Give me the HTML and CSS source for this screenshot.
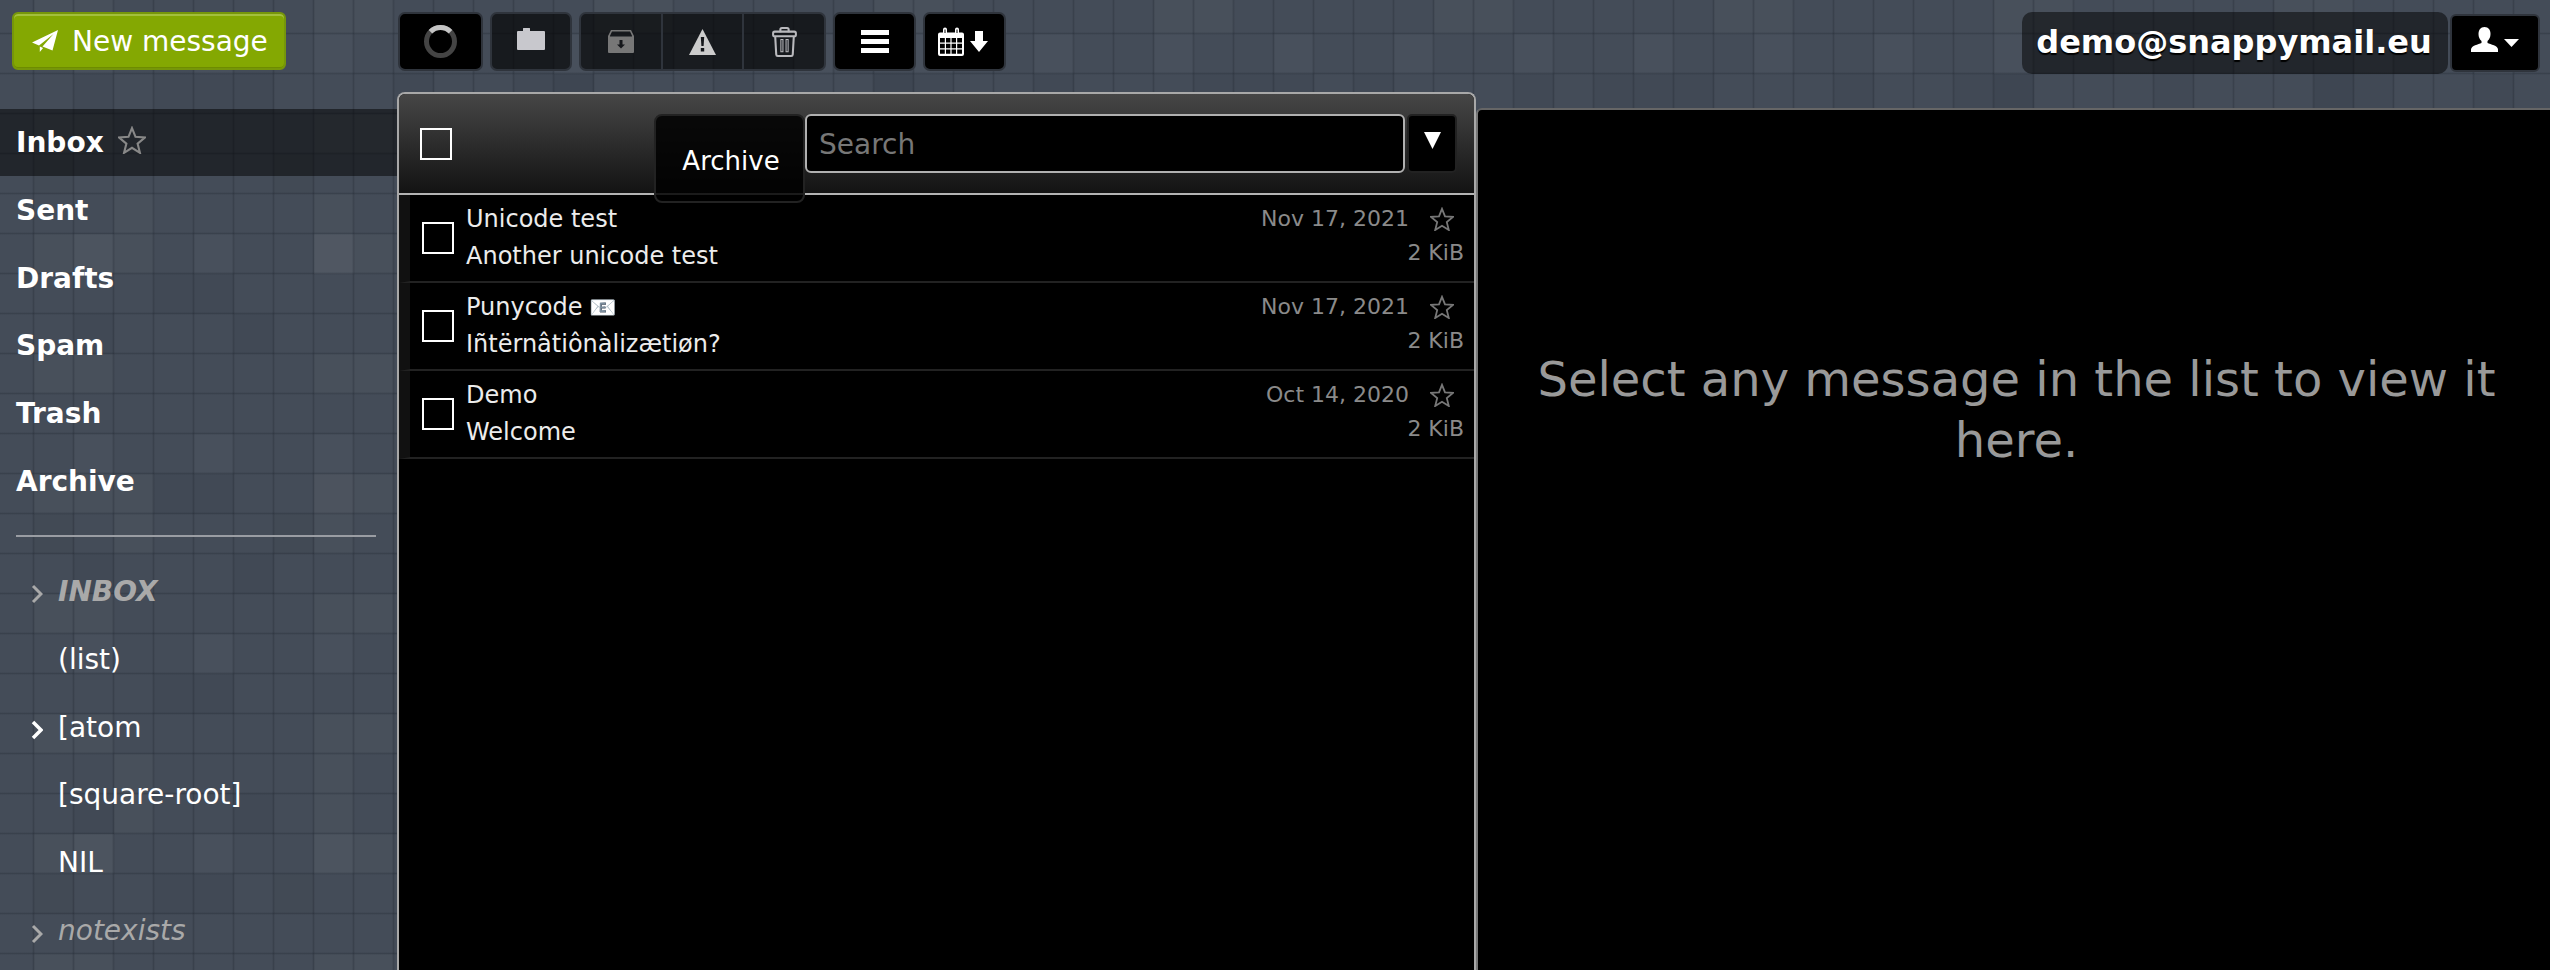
FILE: index.html
```html
<!DOCTYPE html>
<html lang="en">
<head>
<meta charset="utf-8">
<title>Inbox</title>
<link rel="stylesheet" href="styles.css">
</head>
<body>
<div class="app">
  <header class="top">
    <div class="top-left">
      <button class="new-msg">
        <svg class="ico-plane" viewBox="0 0 26 22"><path d="M26 0 0 12.500l7 3L21.500 4 10.500 16.500 20.500 20.500zM7.800 16.500V22l3.300-3.900z"/></svg>
        <span>New message</span>
      </button>
    </div>
    <div class="toolbar">
      <div class="btn on w85">
        <svg class="ico-spin" viewBox="0 0 33 33"><circle cx="16.500" cy="16.500" r="14" fill="none" stroke="#444" stroke-width="5"/><path d="M6.500 6.700a14 14 0 0 1 20 0" fill="none" stroke="#c4c4c4" stroke-width="5"/></svg>
      </div>
      <div class="btn off w82">
        <svg class="ico-folder" viewBox="0 0 28 22"><path d="M6 .5Q6 0 6.500 0h6q.5 0 .5.5V3h14q1 0 1 1v17q0 1-1 1H1q-1 0-1-1V4q0-1 1-1h5z"/></svg>
      </div>
      <div class="group">
        <div class="seg">
          <svg class="ico-archive" viewBox="0 0 26 23"><path d="M3 0h20l3 6v16q0 1-1 1H1q-1 0-1-1V6zM2 6.500h22v-.8L22 1.600H4L2 5.700z" fill-rule="evenodd"/><path d="M11.500 10h3v4.500h2.500L13 18.500 9 14.500h2.500z" fill="#15171b"/></svg>
        </div>
        <div class="seg">
          <svg class="ico-warn" viewBox="0 0 27 26"><path d="M13.500 0 27 26H0z"/><path d="M11.800 8h3.400l-.6 9h-2.200zM11.800 19h3.400v3.400h-3.400z" fill="#15171b"/></svg>
        </div>
        <div class="seg">
          <svg class="ico-trash" viewBox="0 0 24 29"><g fill="none" stroke="#b9b9bd" stroke-width="2"><path d="M8 5V2.500Q8 1 9.500 1h5Q16 1 16 2.500V5"/><rect x="1" y="4.500" width="22" height="4.500" rx="1.500"/><path d="M3 9l1 17.500Q4.100 28 5.500 28h13q1.400 0 1.500-1.500L21 9"/><path d="M8.500 12v12h2V12zM13.500 12v12h2V12z" stroke-width="1"/></g></svg>
        </div>
      </div>
      <div class="btn on w83">
        <svg class="ico-menu" viewBox="0 0 28 23"><path d="M0 0h28v5H0zM0 9h28v5H0zM0 18h28v5H0z"/></svg>
      </div>
      <div class="btn on w83 cal">
        <svg class="ico-cal" viewBox="0 0 26 29"><path d="M5 5.500V2.500Q5 .5 7 .5t2 2v3h8v-3q0-2 2-2t2 2v3h3q2 0 2 2V27q0 2-2 2H2q-2 0-2-2V7.500q0-2 2-2zM6.500 6V3q0-.8.5-.8t.5.8v3zM18.500 6V3q0-.8.5-.8t.5.8v3zM2 11v4.500h4.800V11zm6 0v4.500h4.400V11zm5.600 0v4.500h4.400V11zm5.600 0v4.500H24V11zM2 16.700v4.500h4.800v-4.500zm6 0v4.500h4.400v-4.500zm5.600 0v4.500h4.400v-4.500zm5.600 0v4.500H24v-4.500zM2 22.400v4.400h4.800v-4.400zm6 0v4.400h4.400v-4.400zm5.600 0v4.400h4.400v-4.400zm5.600 0v4.400H24v-4.400z" fill-rule="evenodd"/></svg>
        <svg class="ico-down" viewBox="0 0 18 21"><path d="M5 0h8v10h5l-9 11-9-11h5z"/></svg>
      </div>
    </div>
    <div class="account">
      <div class="email">demo@snappymail.eu</div>
      <div class="user-btn">
        <svg class="ico-user" viewBox="0 0 27 25"><path d="M13.500 0c4 0 6 3 6 7 0 3-1.200 5.500-3 7v2c3 1.500 10.500 2.500 10.500 6.500V25H0v-2.500C0 18.500 7.500 17.500 10.500 16v-2c-1.800-1.500-3-4-3-7 0-4 2-7 6-7z"/></svg>
        <svg class="ico-caret" viewBox="0 0 15 8"><path d="M0 0h15l-7.500 8z"/></svg>
      </div>
    </div>
  </header>

  <div class="content">
    <nav class="side">
      <div class="folder strong current">
        <span>Inbox</span>
        <svg class="star star-side" viewBox="0 0 24 24"><path d="M12 1.800l3 7.500 8 .6-6.200 5.200 2 7.900L12 18.700 5.200 23l2-7.900L1 9.900l8-.6z"/></svg>
      </div>
      <div class="folder strong">Sent</div>
      <div class="folder strong">Drafts</div>
      <div class="folder strong">Spam</div>
      <div class="folder strong">Trash</div>
      <div class="folder strong">Archive</div>
      <hr class="rule">
      <div class="folder sub muted bold-it"><svg class="chev" viewBox="0 0 12 20"><path d="M2 2l8 8-8 8"/></svg>INBOX</div>
      <div class="folder sub">(list)</div>
      <div class="folder sub"><svg class="chev chev-on" viewBox="0 0 12 20"><path d="M2 2l8 8-8 8"/></svg>[atom</div>
      <div class="folder sub">[square-root]</div>
      <div class="folder sub">NIL</div>
      <div class="folder sub muted ital"><svg class="chev" viewBox="0 0 12 20"><path d="M2 2l8 8-8 8"/></svg>notexists</div>
    </nav>

    <main class="panel">
      <div class="panel-head">
        <span class="check"></span>
        <div class="search">
          <div class="tooltip">Archive</div>
          <input class="search-input" type="text" placeholder="Search">
          <div class="search-drop"><svg class="ico-tri" viewBox="0 0 17 17"><path d="M0 0h17l-8.500 17z"/></svg></div>
        </div>
      </div>
      <div class="list">
        <article class="row">
          <span class="check"></span>
          <div class="row-main">
            <div class="line">Unicode test</div>
            <div class="line">Another unicode test</div>
          </div>
          <div class="row-meta">
            <div class="meta-line"><span>Nov 17, 2021</span><svg class="star star-row" viewBox="0 0 24 24"><path d="M12 1.800l3 7.500 8 .6-6.200 5.200 2 7.900L12 18.700 5.200 23l2-7.900L1 9.900l8-.6z"/></svg></div>
            <div class="meta-line">2 KiB</div>
          </div>
        </article>
        <article class="row">
          <span class="check"></span>
          <div class="row-main">
            <div class="line">Punycode <span class="emoji">📧</span></div>
            <div class="line">Iñtërnâtiônàlizætiøn?</div>
          </div>
          <div class="row-meta">
            <div class="meta-line"><span>Nov 17, 2021</span><svg class="star star-row" viewBox="0 0 24 24"><path d="M12 1.800l3 7.500 8 .6-6.200 5.200 2 7.900L12 18.700 5.200 23l2-7.900L1 9.900l8-.6z"/></svg></div>
            <div class="meta-line">2 KiB</div>
          </div>
        </article>
        <article class="row">
          <span class="check"></span>
          <div class="row-main">
            <div class="line">Demo</div>
            <div class="line">Welcome</div>
          </div>
          <div class="row-meta">
            <div class="meta-line"><span>Oct 14, 2020</span><svg class="star star-row" viewBox="0 0 24 24"><path d="M12 1.800l3 7.500 8 .6-6.200 5.200 2 7.900L12 18.700 5.200 23l2-7.900L1 9.900l8-.6z"/></svg></div>
            <div class="meta-line">2 KiB</div>
          </div>
        </article>
      </div>
    </main>

    <section class="preview">
      <p class="empty">Select any message in the list to view it here.</p>
    </section>
  </div>
</div>
</body>
</html>
```

FILE: styles.css
```css
* { box-sizing: border-box; }
html, body { margin: 0; height: 100%; }
body {
  overflow: hidden;
  font-family: "DejaVu Sans", sans-serif;
  color: #fff;
  background-color: #444c58;
  background-image:
    linear-gradient(90deg, transparent 0, rgba(30,36,46,.28) 1.5px, transparent 3px),
    linear-gradient(transparent 0, rgba(30,36,46,.28) 1.5px, transparent 3px),
    conic-gradient(at 40px 40px, transparent 75%, rgba(255,255,255,.025) 0),
    conic-gradient(at 80px 40px, transparent 75%, rgba(255,255,255,.02) 0),
    conic-gradient(at 40px 80px, transparent 75%, rgba(255,255,255,.02) 0),
    conic-gradient(at 40px 40px, transparent 75%, rgba(0,0,0,.04) 0),
    conic-gradient(at 80px 40px, transparent 75%, rgba(0,0,0,.04) 0),
    conic-gradient(at 40px 40px, transparent 75%, rgba(0,0,0,.03) 0);
  background-size:
    40px 40px,
    40px 40px,
    120px 200px,
    280px 120px,
    200px 280px,
    160px 240px,
    360px 200px,
    240px 360px;
  background-position:
    32px 0,
    0 32px,
    194px 34px,
    34px 114px,
    314px 194px,
    74px 74px,
    154px 274px,
    274px 154px;
}

.app { display: flex; flex-direction: column; height: 970px; }

/* top bar */
.top { display: flex; height: 92px; padding-top: 12px; flex: none; }
.top-left { width: 398px; padding-left: 12px; flex: none; }
.new-msg {
  display: flex; align-items: center; gap: 14px;
  width: 274px; height: 58px; padding: 0 0 0 18px;
  font: 28px "DejaVu Sans", sans-serif; color: #fff;
  background: #84a802;
  border: 2px solid #76960a;
  border-radius: 6px;
  box-shadow: inset 0 2px 0 #a3bf3c, inset 0 -1px 0 #6e8c00;
}
.ico-plane { width: 26px; height: 22px; fill: #fff; }

.toolbar { display: flex; gap: 7px; align-items: flex-start; }
.btn, .group {
  height: 59px; border: 2px solid #2f343c; border-radius: 7px;
  display: flex; align-items: center; justify-content: center;
}
.on { background: #000; }
.off, .group { background: rgba(0,0,0,.65); }
.w85 { width: 85px; }
.w82 { width: 82px; }
.w83 { width: 83px; }
.group { width: 247px; }
.seg {
  flex: 1; height: 100%;
  display: flex; align-items: center; justify-content: center;
  border-right: 2px solid #2f343c;
}
.seg:last-child { border-right: 0; }
.cal { gap: 6px; padding-right: 3px; }

.ico-spin { width: 33px; height: 33px; }
.ico-folder { width: 28px; height: 22px; fill: #c8c8cd; margin-bottom: 5px; }
.ico-archive { width: 26px; height: 23px; fill: #777; }
.ico-warn { width: 27px; height: 26px; fill: #ccc; }
.ico-trash { width: 25px; height: 30px; }
.ico-menu { width: 28px; height: 23px; fill: #fff; }
.ico-cal { width: 26px; height: 29px; fill: #fff; }
.ico-down { width: 18px; height: 21px; fill: #fff; }

.account { margin-left: auto; display: flex; align-items: center; gap: 2px; padding-right: 10px; height: 62px; }
.email {
  width: 426px; height: 62px; line-height: 60px; text-align: center;
  font-size: 32px; font-weight: 700; padding-right: 2px;
  background: rgba(0,0,0,.5); border-radius: 10px;
  text-shadow: 0 2px 1px #000;
}
.user-btn {
  width: 90px; height: 58px; background: #000;
  border: 2px solid #2f343c; border-radius: 6px;
  display: flex; align-items: center; justify-content: center; gap: 6px;
}
.ico-user { width: 27px; height: 25px; fill: #fff; margin-bottom: 7px; }
.ico-caret { width: 15px; height: 8px; fill: #fff; }

/* content */
.content { display: flex; flex: 1; min-height: 0; }

.side { width: 397px; flex: none; padding-top: 16.500px; }
.folder {
  height: 67.840px; display: flex; align-items: center;
  font-size: 28px; padding-left: 16px; gap: 14px;
}
.strong { font-weight: 700; }
.current { background: rgba(0,0,0,.5); }
.rule { border: 0; height: 2px; margin: 20px 21px 20px 16px; background: #9a9da3; }
.sub { padding-left: 58px; position: relative; }
.muted { color: #a9a9a9; }
.bold-it { font-weight: 700; font-style: italic; }
.ital { font-style: italic; }
.chev {
  position: absolute; left: 31px; top: 27px; width: 12px; height: 20px;
  fill: none; stroke: #a9a9a9; stroke-width: 3;
}
.chev-on { stroke: #fff; stroke-width: 3.500; }

.star { fill: none; }
.star-side { width: 28px; height: 28px; stroke: #888; stroke-width: 1.800; margin-bottom: 5px; }
.star-row { width: 24px; height: 24px; stroke: #777; stroke-width: 1.800; margin-left: 21px; margin-right: 10px; }

/* list panel */
.panel {
  width: 1079px; flex: none;
  background: #000;
  border: 2px solid #a8a8a8; border-bottom: 0;
  border-radius: 8px 8px 0 0;
  display: flex; flex-direction: column;
}
.panel-head {
  height: 101px; flex: none;
  display: flex; align-items: center; justify-content: space-between;
  padding: 0 17px 0 21px;
  background: linear-gradient(#464646, #131313);
  border-bottom: 2px solid #b4b4b4;
  border-radius: 6px 6px 0 0;
}
.check { width: 32px; height: 32px; border: 2px solid #fff; flex: none; }
.search { display: flex; gap: 2px; position: relative; }
.search-input {
  width: 600px; height: 59px; padding: 2px 12px 0;
  font: 28px "DejaVu Sans", sans-serif; color: #fff;
  background: #000; border: 2px solid #b0b0b0; border-radius: 6px; outline: 0;
}
.search-input::placeholder { color: #777; opacity: 1; }
.search-drop {
  width: 50px; height: 59px; background: #000; border-radius: 5px;
  border: 2px solid #222;
  display: flex; justify-content: center; padding-top: 16px;
}
.ico-tri { width: 17px; height: 17px; fill: #fff; }
.tooltip {
  position: absolute; right: 100%; top: 0; z-index: 2;
  width: 151px; height: 89px;
  display: flex; align-items: center; justify-content: center; padding: 4px 0 0 3px;
  font-size: 26px; color: #fff;
  background: rgba(0,0,0,.85);
  border: 2px solid #222; border-radius: 8px;
}

.list { flex: 1; }
.row {
  height: 88px; display: flex; align-items: center;
  border-bottom: 2px solid #222;
  border-left: 11px solid #111;
  padding-left: 12px; padding-right: 10px;
}
.row-main { margin-left: 12px; flex: 1; }
.line { font-size: 24px; line-height: 37px; color: #ececec; display: flex; align-items: center; gap: 6px; }
.emoji { font-size: 22px; line-height: 1; filter: grayscale(.85) brightness(1.05); }
.row-meta { padding-bottom: 5px; text-align: right; }
.meta-line {
  font-size: 22px; line-height: 34px; color: #8a8a8a;
  display: flex; align-items: center; justify-content: flex-end;
}

/* preview */
.preview {
  flex: 1; margin-top: 16px; background: #000;
  border-top: 2px solid #666; border-left: 2px solid #777;
  border-radius: 6px 0 0 0;
  padding: 239px 28px 0 33px;
}
.empty {
  margin: 0; text-align: center; font-size: 48px; line-height: 60.500px; color: #999;
}
```
